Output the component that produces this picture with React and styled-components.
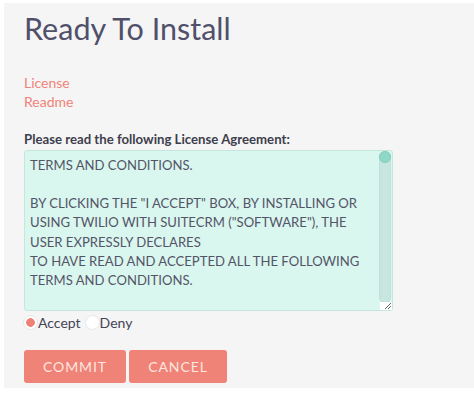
import React, { useState } from 'react'
import styled, { createGlobalStyle } from 'styled-components'

const GlobalStyle = createGlobalStyle`
  html, body {
    margin: 0;
    padding: 0;
    background: #ffffff;
  }
  * {
    box-sizing: border-box;
  }
`

const licenseText = `TERMS AND CONDITIONS.

BY CLICKING THE "I ACCEPT" BOX, BY INSTALLING OR
USING TWILIO WITH SUITECRM ("SOFTWARE"), THE
USER EXPRESSLY DECLARES
TO HAVE READ AND ACCEPTED ALL THE FOLLOWING
TERMS AND CONDITIONS.

1. Licence grant. Subject to the terms of this
Agreement, the Licensor grants you a limited,
non-exclusive, non-transferable license.`

const App = () => {
  const [choice, setChoice] = useState('accept')

  return (
    <React.Fragment>
      <GlobalStyle />
      <Panel>
        <Title>Ready To Install</Title>
        <Links>
          <Link href="#license">License</Link>
          <Link href="#readme">Readme</Link>
        </Links>
        <Label>Please read the following License Agreement:</Label>
        <BoxWrap>
          <LicenseBox readOnly value={licenseText} />
          <ScrollTrack>
            <ScrollThumb />
          </ScrollTrack>
          <Resizer>
            <svg width="8" height="8" viewBox="0 0 8 8">
              <path d="M7 1 L1 7 M7 4 L4 7" stroke="#666" strokeWidth="1" fill="none" />
            </svg>
          </Resizer>
        </BoxWrap>
        <RadioRow>
          <RadioLabel>
            <Radio
              type="radio"
              name="agree"
              checked={choice === 'accept'}
              onChange={() => setChoice('accept')}
            />
            Accept
          </RadioLabel>
          <RadioLabel>
            <Radio
              type="radio"
              name="agree"
              checked={choice === 'deny'}
              onChange={() => setChoice('deny')}
            />
            Deny
          </RadioLabel>
        </RadioRow>
        <Buttons>
          <Button width="102px">COMMIT</Button>
          <Button width="98px">CANCEL</Button>
        </Buttons>
      </Panel>
    </React.Fragment>
  )
}

const Panel = styled.div`
  margin: 3px 0 0 4px;
  height: 385px;
  background: #f5f5f6;
  padding: 6px 0 0 20px;
  font-family: Lato, "Open Sans", sans-serif;
`

const Title = styled.h1`
  margin: 0;
  font-size: 30.5px;
  font-weight: 400;
  line-height: 38px;
  color: #50506a;
`

const Links = styled.div`
  display: flex;
  flex-direction: column;
  margin-top: 26px;
`

const Link = styled.a`
  font-size: 14px;
  line-height: 19px;
  color: #f08377;
  text-decoration: none;
`

const Label = styled.div`
  margin-top: 20px;
  font-size: 13.2px;
  font-weight: 700;
  line-height: 16px;
  color: #3e3e4c;
`

const BoxWrap = styled.div`
  position: relative;
  margin-top: 3px;
  width: 369px;
  height: 161px;
`

const LicenseBox = styled.textarea`
  display: block;
  width: 100%;
  height: 100%;
  padding: 5px 18px 0 5px;
  background: #d9f6ef;
  border: 1px solid #c3e6dd;
  border-radius: 3px;
  font-family: Lato, "Open Sans", sans-serif;
  font-size: 13.1px;
  line-height: 19.15px;
  color: #545466;
  resize: none;
  outline: none;
  overflow: hidden;
  white-space: pre;
`

const ScrollTrack = styled.div`
  position: absolute;
  top: 1px;
  right: 2px;
  width: 12px;
  height: 152px;
  border-radius: 6px;
  background: #c6e6df;
  box-shadow: inset 0 0 2px rgba(0, 0, 0, 0.1);
`

const ScrollThumb = styled.div`
  width: 12px;
  height: 12px;
  border-radius: 50%;
  background: #8fd7c6;
  border: 1px solid #84ccbb;
`

const Resizer = styled.div`
  position: absolute;
  right: 1px;
  bottom: 1px;
  width: 12px;
  height: 8px;
  background: #ffffff;
  display: flex;
  align-items: flex-end;
  justify-content: flex-end;
  svg {
    display: block;
  }
`

const RadioRow = styled.div`
  display: flex;
  align-items: center;
  margin-top: 2px;
  height: 18px;
`

const RadioLabel = styled.label`
  display: flex;
  align-items: center;
  font-size: 14px;
  color: #444455;
  cursor: pointer;
  & + & {
    margin-left: 5px;
  }
`

const Radio = styled.input`
  appearance: none;
  width: 15px;
  height: 15px;
  margin: 0 0 0 -1px;
  border-radius: 50%;
  background: #ffffff;
  border: 1px solid #e6e6e8;
  cursor: pointer;

  &:checked {
    background: radial-gradient(circle, #f07f74 0 4px, #ffffff 4.6px);
  }
`

const Buttons = styled.div`
  display: flex;
  gap: 3px;
  margin-top: 19px;
`

const Button = styled.button`
  width: ${props => props.width};
  height: 33px;
  border: none;
  border-radius: 3px;
  background: #f08377;
  color: #fde6e0;
  font-family: Lato, "Open Sans", sans-serif;
  font-size: 14px;
  letter-spacing: 0.9px;
  cursor: pointer;
  padding: 0;
`

export default App
